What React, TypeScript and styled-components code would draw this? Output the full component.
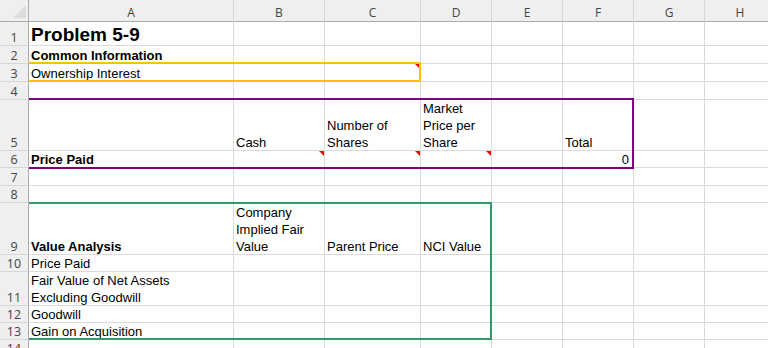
import React from "react";
import styled, { createGlobalStyle } from "styled-components";

const GlobalStyle = createGlobalStyle`
  html, body {
    margin: 0;
    padding: 0;
    background: #ffffff;
    overflow: hidden;
  }
`;

type Col = "A" | "B" | "C" | "D" | "E" | "F" | "G" | "H";

const COLS: Col[] = ["A", "B", "C", "D", "E", "F", "G", "H"];
const COL_WIDTHS = [205, 91, 96, 71, 71, 71, 71, 71];
const ROW_HEIGHTS = [24, 18, 18, 18, 51, 17, 18, 17, 52, 17, 34, 17, 17, 17];

const GRID = "#dadada";
const HEADER_BG = "#efefef";
const HEADER_EDGE = "#ababab";

interface CellData {
  text?: string;
  bold?: boolean;
  size?: number;
  align?: "left" | "right";
  note?: boolean;
}

const cells: Record<string, CellData> = {
  "1A": { text: "Problem 5-9", bold: true, size: 19 },
  "2A": { text: "Common Information", bold: true },
  "3A": { text: "Ownership Interest" },
  "3C": { note: true },
  "5B": { text: "Cash" },
  "5C": { text: "Number of\nShares" },
  "5D": { text: "Market\nPrice per\nShare" },
  "5F": { text: "Total" },
  "6A": { text: "Price Paid", bold: true },
  "6B": { note: true },
  "6C": { note: true },
  "6D": { note: true },
  "6F": { text: "0", align: "right" },
  "9A": { text: "Value Analysis", bold: true },
  "9B": { text: "Company\nImplied Fair\nValue" },
  "9C": { text: "Parent Price" },
  "9D": { text: "NCI Value" },
  "10A": { text: "Price Paid" },
  "11A": { text: "Fair Value of Net Assets\nExcluding Goodwill" },
  "12A": { text: "Goodwill" },
  "13A": { text: "Gain on Acquisition" },
};

interface FrameData {
  from: [number, Col];
  to: [number, Col];
  color: string;
  top: number;
  bottom: number;
}

// Outline borders drawn around cell ranges
const frames: FrameData[] = [
  { from: [3, "A"], to: [3, "C"], color: "#ffc000", top: 2, bottom: 0 },
  { from: [5, "A"], to: [6, "F"], color: "#800080", top: 2, bottom: 1 },
  { from: [9, "A"], to: [13, "D"], color: "#339966", top: 1, bottom: 0 },
];

const Sheet = styled.div`
  display: grid;
  grid-template-columns: 29px ${COL_WIDTHS.map((w) => `${w}px`).join(" ")};
  grid-template-rows: 22px ${ROW_HEIGHTS.map((h) => `${h}px`).join(" ")};
  width: 768px;
  height: 348px;
  overflow: hidden;
  background: #ffffff;
`;

const Corner = styled.div`
  grid-row: 1;
  grid-column: 1;
  background: ${HEADER_BG};
  border-right: 1px solid ${HEADER_EDGE};
  border-bottom: 1px solid ${HEADER_EDGE};
  box-sizing: border-box;
  display: flex;
  align-items: flex-end;
  justify-content: flex-end;
  padding: 0 2px 3px 0;
`;

const ColHeader = styled.div<{ $c: number }>`
  grid-row: 1;
  grid-column: ${(p) => p.$c + 2};
  background: ${HEADER_BG};
  border-right: 1px solid #d6d6d6;
  border-bottom: 1px solid ${HEADER_EDGE};
  box-sizing: border-box;
  display: flex;
  align-items: center;
  justify-content: center;
  font-family: "Open Sans", "Noto Sans", sans-serif;
  font-size: 12px;
  color: #444444;
  padding-top: 3px;
`;

const RowHeader = styled.div<{ $r: number }>`
  grid-row: ${(p) => p.$r + 1};
  grid-column: 1;
  background: ${HEADER_BG};
  border-right: 1px solid ${HEADER_EDGE};
  border-bottom: 1px solid #d6d6d6;
  box-sizing: border-box;
  display: flex;
  align-items: flex-end;
  justify-content: center;
  font-family: "Open Sans", "Noto Sans", sans-serif;
  font-size: 12.5px;
  line-height: 16px;
  color: #444444;
`;

const RowNumber = styled.span`
  margin-bottom: -1px;
`;

const Cell = styled.div<{
  $r: number;
  $c: number;
  $bold?: boolean;
  $size?: number;
  $align?: "left" | "right";
}>`
  grid-row: ${(p) => p.$r + 1};
  grid-column: ${(p) => p.$c + 2};
  position: relative;
  box-sizing: border-box;
  border-right: 1px solid ${GRID};
  border-bottom: 1px solid ${GRID};
  display: flex;
  align-items: flex-end;
  justify-content: ${(p) => (p.$align === "right" ? "flex-end" : "flex-start")};
  padding: 0 ${(p) => (p.$align === "right" ? 4 : 2)}px 0 2px;
  font-family: "Liberation Sans", Arial, sans-serif;
  font-size: ${(p) => p.$size ?? 13}px;
  font-weight: ${(p) => (p.$bold ? 700 : 400)};
  line-height: ${(p) => (p.$size ? "normal" : "17px")};
  color: #000000;
  white-space: pre;
`;

const CellText = styled.span`
  margin-bottom: -1px;
`;

const Note = styled.span`
  position: absolute;
  top: 0;
  right: 0;
  width: 5px;
  height: 5px;
  background: #ff0000;
  clip-path: polygon(0 0, 100% 0, 100% 100%);
`;

const Frame = styled.div<{
  $rows: string;
  $cols: string;
  $color: string;
  $top: number;
  $bottom: number;
}>`
  grid-row: ${(p) => p.$rows};
  grid-column: ${(p) => p.$cols};
  margin-top: -${(p) => p.$top}px;
  margin-bottom: -${(p) => p.$bottom}px;
  border-top: 2px solid ${(p) => p.$color};
  border-right: 2px solid ${(p) => p.$color};
  border-bottom: 2px solid ${(p) => p.$color};
  pointer-events: none;
  z-index: 1;
`;

export default function App() {
  const rowNumbers = ROW_HEIGHTS.map((_, i) => i + 1);

  return (
    <>
      <GlobalStyle />
      <Sheet>
        <Corner>
          <svg width="13" height="13" viewBox="0 0 13 13">
            <polygon points="13,0 13,13 0,13" fill="#dcdcdc" />
          </svg>
        </Corner>
        {COLS.map((c, ci) => (
          <ColHeader key={c} $c={ci}>
            {c}
          </ColHeader>
        ))}
        {rowNumbers.map((r) => (
          <React.Fragment key={r}>
            <RowHeader $r={r}>
              <RowNumber>{r}</RowNumber>
            </RowHeader>
            {COLS.map((c, ci) => {
              const d = cells[`${r}${c}`] ?? {};
              return (
                <Cell
                  key={c}
                  $r={r}
                  $c={ci}
                  $bold={d.bold}
                  $size={d.size}
                  $align={d.align}
                >
                  {d.text && <CellText>{d.text}</CellText>}
                  {d.note && <Note />}
                </Cell>
              );
            })}
          </React.Fragment>
        ))}
        {frames.map((f, i) => (
          <Frame
            key={i}
            $rows={`${f.from[0] + 1} / ${f.to[0] + 2}`}
            $cols={`${COLS.indexOf(f.from[1]) + 2} / ${COLS.indexOf(f.to[1]) + 3}`}
            $color={f.color}
            $top={f.top}
            $bottom={f.bottom}
          />
        ))}
      </Sheet>
    </>
  );
}
